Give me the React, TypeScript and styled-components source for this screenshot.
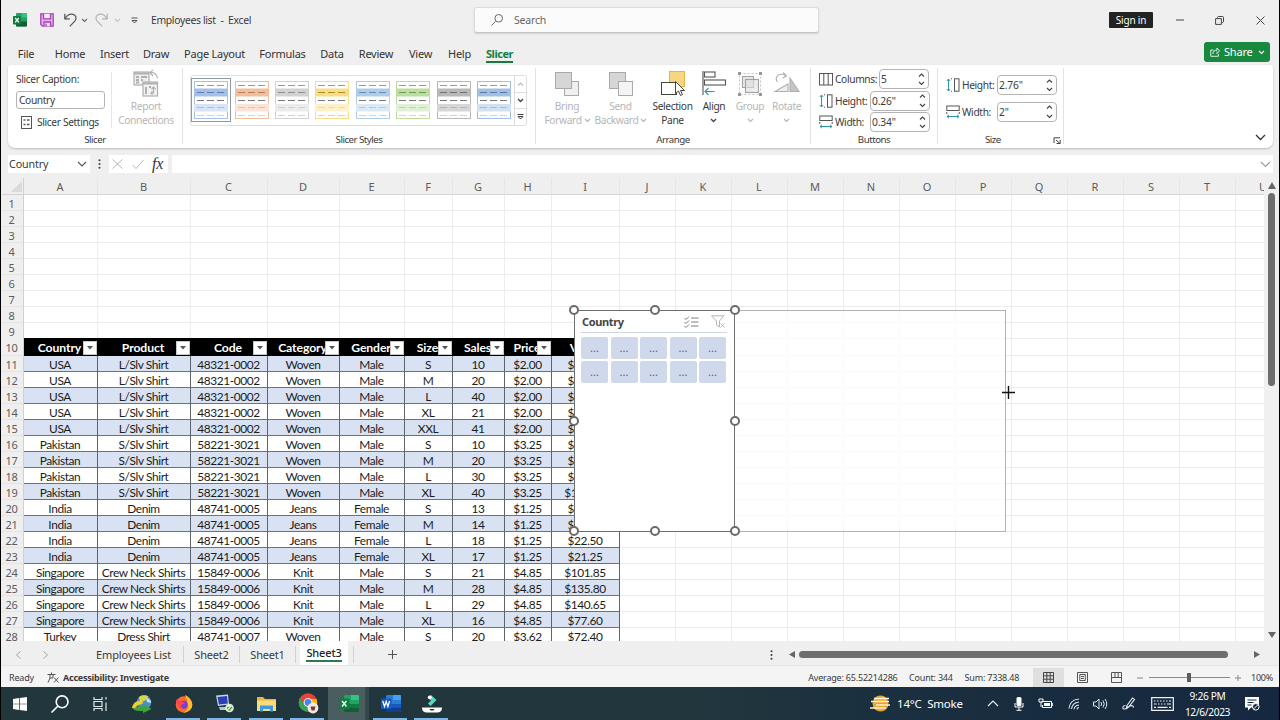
import React from 'react';
import styled, { createGlobalStyle } from 'styled-components';

const UI = '"Noto Sans", "Open Sans", sans-serif';
const CELL = 'Lato, "Liberation Sans", sans-serif';

const Global = createGlobalStyle`
  * { box-sizing: border-box; }
  body { margin: 0; font-family: ${UI}; background: #efefef; overflow: hidden; }
  svg { display: block; flex: none; overflow: visible; }
`;

/* ---------- shell ---------- */
const Window = styled.div`
  width: 1280px; height: 720px; display: flex; flex-direction: column; overflow: hidden;
  background: #efefef; border-left: 1px solid #000; border-right: 1px solid #000; color: #333;
  white-space: nowrap; font-size: 11px;
`;
const Label = styled.span<{ $size?: number; $ls?: number; $color?: string; $weight?: number }>`
  font-size: ${p => p.$size ?? 10.2}px; letter-spacing: ${p => p.$ls ?? -0.35}px;
  color: ${p => p.$color ?? '#3a3a3a'}; font-weight: ${p => p.$weight ?? 400}; line-height: 14px;
`;
const Slot = styled.div<{ $w: number }>`
  width: ${p => p.$w}px; height: 100%; flex: none; display: flex; align-items: center; justify-content: center;
`;

/* ---------- title bar ---------- */
const TitleBar = styled.header`
  height: 40px; display: flex; align-items: center; flex: none; padding-left: 5px;
`;
const DocName = styled.div`width: 326px; padding-left: 3px; display: flex; flex: none;`;
const SearchBox = styled.div`
  width: 345px; height: 26px; background: #fbfbfb; border: 1px solid #dcdcdc; border-bottom-color: #c4c4c4; border-radius: 3px;
  display: flex; align-items: center; gap: 11px; padding-left: 16px; box-shadow: 0 1px 2px rgba(0,0,0,.12); flex: none;
`;
const SignIn = styled.div`
  margin-left: 290px; width: 44px; height: 16px; background: #222; border-radius: 1px; flex: none;
  display: flex; align-items: center; justify-content: center;
`;

/* ---------- ribbon tabs ---------- */
const TabRow = styled.nav`height: 25px; display: flex; flex: none; padding-left: 8px;`;
const RibbonTab = styled.div<{ $w: number; $active?: boolean }>`
  width: ${p => p.$w}px; height: 25px; display: flex; justify-content: center; padding-top: 6px;
  span {
    height: 17px; line-height: 16px; font-size: 11px;
    color: ${p => (p.$active ? '#17803d' : '#333')}; font-weight: ${p => (p.$active ? 700 : 400)};
    letter-spacing: ${p => (p.$active ? -0.45 : -0.25)}px;
    border-bottom: ${p => (p.$active ? '2px solid #1a7a40' : 'none')};
  }
`;
const ShareButton = styled.div`
  margin-left: auto; margin-right: 9px; margin-top: 2px; width: 66px; height: 20px; background: #18893f; border-radius: 3px;
  display: flex; align-items: center; padding: 0 5px 0 6px; gap: 4px;
`;

/* ---------- ribbon ---------- */
const Ribbon = styled.section`
  height: 83px; margin: 0 6px 0 7px; background: #fff; border-radius: 3px 3px 7px 7px; flex: none; display: flex;
  box-shadow: 0 1px 2px rgba(0,0,0,.22); padding-top: 3px;
`;
const Group = styled.div<{ $w: number }>`
  width: ${p => p.$w}px; height: 76px; border-right: 1px solid #e2e2e2; display: flex; flex-direction: column; flex: none;
`;
const GroupBody = styled.div<{ $pad?: string }>`height: 65px; flex: none; display: flex; padding: ${p => p.$pad ?? '0'};`;
const GroupFoot = styled.div`height: 14px; display: flex; justify-content: center;`;
const SizeFoot = styled.div`height: 14px; display: flex; justify-content: space-between; padding: 0 2px 0 47px;`;
const CaptionPart = styled.div`
  width: 104px; height: 56px; margin-top: 4px; padding-left: 8px; display: flex; flex-direction: column; border-right: 1px solid #e6e6e6;
`;
const CaptionInput = styled.div`
  width: 89px; height: 18px; flex: none; margin-top: 5px; border: 1px solid #b4b4b4; border-radius: 3px; display: flex; align-items: center; padding-left: 2px;
`;
const SettingsLine = styled.div`display: flex; align-items: center; gap: 5px; margin: 6px 0 0 5px;`;
const BigButton = styled.div<{ $w: number; $pt?: number }>`
  width: ${p => p.$w}px; display: flex; flex-direction: column; align-items: center; padding-top: ${p => p.$pt ?? 3}px; flex: none;
`;
const BigText = styled.div<{ $mt?: number }>`
  margin-top: ${p => p.$mt ?? 3}px; display: flex; flex-direction: column; align-items: center;
`;
const WithCaret = styled.div`display: flex; align-items: center; gap: 3px; height: 14px;`;

const Gallery = styled.div`
  width: 337px; height: 51px; border: 1px solid #dedede; border-radius: 3px; display: flex; justify-content: space-between;
`;
const Tiles = styled.div`display: flex; padding: 2px 0 0 0;`;
const TileFrame = styled.div<{ $on?: boolean }>`
  width: 40.4px; height: 44px; border: 1.5px solid ${p => (p.$on ? '#8c98a2' : 'transparent')}; display: flex; align-items: center; justify-content: center;
`;
const GalleryNav = styled.div`
  width: 12px; border-left: 1px solid #dcdcdc; display: flex; flex-direction: column;
  div { flex: 1; display: flex; align-items: center; justify-content: center; }
  div + div { border-top: 1px solid #dcdcdc; }
`;

const Fields = styled.div<{ $gap: number }>`display: flex; flex-direction: column; gap: ${p => p.$gap}px;`;
const FieldRow = styled.div`display: flex; align-items: center;`;
const FieldLabel = styled.div<{ $w: number }>`width: ${p => p.$w}px; display: flex; padding-left: 2px;`;
const Spinner = styled.div<{ $w: number }>`
  width: ${p => p.$w}px; height: 20px; border: 1px solid #b4b4b4; border-radius: 4px; display: flex; align-items: center;
  justify-content: space-between; padding: 0 4px 0 1px;
`;
const Arrows = styled.div`display: flex; flex-direction: column; gap: 6px;`;
const Collapse = styled.div`margin-left: auto; padding: 67px 8px 0 0;`;

/* ---------- formula bar ---------- */
const FormulaRow = styled.div`height: 30px; padding: 7px 6px 5px 7px; display: flex; flex: none;`;
const NameBox = styled.div`
  width: 82px; height: 18px; background: #fff; display: flex; align-items: center; justify-content: space-between; padding: 0 4px 0 1px;
`;
const FxBox = styled.div`
  width: 59px; height: 18px; background: #fff; display: flex; align-items: center; justify-content: space-between; padding: 0 5px 0 3px;
`;
const Fx = styled.span`font: italic 400 16px/16px "Liberation Serif", serif; color: #333; letter-spacing: -0.3px;`;
const FormulaInput = styled.div`
  flex: 1; height: 18px; margin-left: 4px; background: #fff; display: flex; align-items: center; justify-content: flex-end; padding-right: 3px;
`;

/* ---------- sheet ---------- */
const SheetArea = styled.main`height: 463px; display: flex; flex: none; position: relative; overflow: hidden;`;
const Grid = styled.div`width: 1263px; flex: none; overflow: hidden; background: #fff;`;
const cols = [74, 93, 77, 72, 65, 48, 52, 47, 68, ...Array(12).fill(56)] as number[];
const TEMPLATE = `23px ${cols.map(c => c + 'px').join(' ')}`;
const Row = styled.div<{ $h: number; $lift?: boolean }>`
  display: grid; grid-template-columns: ${TEMPLATE}; grid-template-rows: ${p => p.$h}px; height: ${p => p.$h}px; width: 1400px;
  margin-top: ${p => (p.$lift ? -1 : 0)}px;
`;
const ColHead = styled.div`
  background: #efefef; border-bottom: 1px solid #d4d4d4; border-right: 1px solid #e6e6e6; color: #5c5c5c;
  font-size: 11px; line-height: 17px; text-align: center; padding-right: 1px;
`;
const Corner = styled.div`
  background: #efefef; border-bottom: 1px solid #d4d4d4; border-right: 1px solid #d0d0d0;
  display: flex; align-items: flex-end; justify-content: flex-end; padding: 0 1px 2px 0;
`;
const RowHead = styled.div<{ $h: number }>`
  background: #efefef; border-right: 1px solid #d0d0d0; border-bottom: 1px solid #e4e4e4; color: #5c5c5c;
  font-size: 11px; line-height: ${p => p.$h}px; text-align: center; padding-right: 1px; letter-spacing: -0.2px;
`;
const Blank = styled.div`border-right: 1px solid #ececec; border-bottom: 1px solid #ececec;`;
const Cell = styled.div<{ $band: boolean }>`
  background: ${p => (p.$band ? '#d9e2f2' : '#fff')}; border-right: 1px solid #5f646c; border-bottom: 1px solid #6d7178;
  font: 400 11.9px/17px ${CELL}; letter-spacing: -0.4px; color: #1c1c1c; text-align: center; padding-right: 1px;
`;
const HeadCell = styled.div`
  background: #000; color: #fff; font: 700 12.2px/19px ${CELL}; letter-spacing: -0.1px; display: flex; justify-content: center;
  position: relative; overflow: hidden; padding-right: 3px;
`;
const Filter = styled.div`
  position: absolute; right: 1px; top: 3px; width: 14px; height: 14px; background: #fff; border: 1px solid #c8c8c8;
  display: flex; align-items: center; justify-content: center;
`;
const VScroll = styled.div`
  width: 15px; height: 100%; background: #f0f0f0; display: flex; flex-direction: column; align-items: center; justify-content: space-between; padding: 4px 0 3px;
`;
const VTop = styled.div`display: flex; flex-direction: column; align-items: center; gap: 4px;`;
const VThumb = styled.div`width: 7px; height: 193px; background: #6e6e6e; border-radius: 4px;`;

/* ---------- slicer floating object ---------- */
const DragOutline = styled.div`
  position: absolute; left: 573px; top: 132px; width: 432px; height: 222px; border: 1px solid #b2b2b2; background: rgba(255,255,255,.72);
`;
const SlicerBox = styled.div`
  position: absolute; left: 573px; top: 132px; width: 161px; height: 222px; border: 1px solid #6f6f6f; background: #fff; padding: 0 7px 0 6px;
`;
const SlicerHead = styled.div`
  height: 22px; border-bottom: 1px solid #cfd6e6; display: flex; align-items: center; gap: 12px; padding: 0 2px 0 1px;
`;
const SlicerTitle = styled.span`font: 700 11px/14px "Noto Sans", sans-serif; letter-spacing: -0.35px; color: #444; flex: 1;`;
const SlicerItems = styled.div`display: grid; grid-template-columns: repeat(5, 27px); gap: 2px 2.5px; margin-top: 4px;`;
const SlicerItem = styled.div`
  height: 22px; background: #d0d9ec; border-radius: 2px; text-align: center; font: 400 11px/21px "Noto Sans", sans-serif; color: #4f5f85;
`;
const Handle = styled.i<{ $x: number; $y: number }>`
  position: absolute; left: ${p => p.$x - 4.5}px; top: ${p => p.$y - 4.5}px; width: 10px; height: 10px; border-radius: 50%;
  border: 2px solid #6a6a6a; background: #fff;
`;
const Cross = styled.div`position: absolute; left: 1001px; top: 208px;`;

/* ---------- sheet tabs ---------- */
const TabsBar = styled.div`height: 25px; background: #efefef; display: flex; align-items: center; flex: none; border-bottom: 1px solid #e4e4e4; padding-top: 3px;`;
const SheetTab = styled.div<{ $w: number; $line?: boolean }>`
  width: ${p => p.$w}px; height: 17px; display: flex; align-items: center; justify-content: center; flex: none;
  border-right: 1px solid ${p => (p.$line ? '#d2d2d2' : 'transparent')};
`;
const ActiveTab = styled.div`
  width: 48px; height: 24px; margin: -4px 0 0 4px; background: #fff; display: flex; justify-content: center; flex: none; padding-top: 4px;
  span { height: 17px; line-height: 15px; border-bottom: 2px solid #2c7a51; }
`;
const HTrack = styled.div`width: 429px; height: 7px; background: #6e6e6e; border-radius: 4px; margin-right: 26px; flex: none;`;

/* ---------- status bar ---------- */
const Status = styled.div`height: 21px; background: #f4f4f4; display: flex; align-items: center; flex: none; padding-top: 2px;`;
const ViewButton = styled.div<{ $w: number; $on?: boolean }>`
  width: ${p => p.$w}px; height: 19px; background: ${p => (p.$on ? '#dfdfdf' : 'transparent')}; display: flex; align-items: center; justify-content: center;
`;
const ZoomTrack = styled.div`
  width: 83px; height: 9px; display: flex; align-items: center; justify-content: center;
  background: linear-gradient(#8a8a8a, #8a8a8a) center / 100% 1px no-repeat;
`;
const ZoomThumb = styled.div`width: 4px; height: 9px; background: #5e5e5e;`;

/* ---------- taskbar ---------- */
const Taskbar = styled.footer`
  height: 33px; flex: none; display: flex; background: linear-gradient(90deg, #21373c 0%, #21363d 55%, #1a2f3f 70%, #16283f 100%);
  margin: 0 -1px;
`;
const AppSlot = styled.div<{ $open?: boolean; $active?: boolean }>`
  width: 41.4px; height: 33px; display: flex; align-items: center; justify-content: center; flex: none; padding-left: 1px;
  background: ${p => (p.$active ? 'linear-gradient(90deg, #4a5d60 90%, #34494e 90%)' : p.$open ? 'linear-gradient(#7eb6e8, #7eb6e8) center bottom / 34px 2px no-repeat' : 'none')};
`;
const Weather = styled.div`margin-left: auto; width: 110px; display: flex; align-items: center; gap: 6px;`;
const Clock = styled.div`
  width: 55px; display: flex; flex-direction: column; align-items: center; gap: 2px; padding-top: 2px;
`;

/* ---------- icons ---------- */
const Caret = ({ w = 6, c = '#444', up = false, s = 1.1 }: { w?: number; c?: string; up?: boolean; s?: number }) => (
  <svg width={w} height={w / 2} viewBox="0 0 6 3" fill="none" stroke={c} strokeWidth={(s * 6) / w}>
    <path d={up ? 'M0 3 3 0 6 3' : 'M0 0 3 3 6 0'} />
  </svg>
);
const ExcelSmall = () => (
  <svg width="14" height="14" viewBox="0 0 14 14">
    <rect x="3" y="0" width="11" height="13.5" rx="1" fill="#21a366" />
    <path d="M8.5 0H13q1 0 1 1v3.4H8.500z" fill="#33c481" />
    <path d="M3 8.500h11v4q0 1-1 1H4q-1 0-1-1z" fill="#185c37" />
    <rect x="0" y="3" width="8" height="8.500" rx=".8" fill="#107c41" />
    <path d="M2.200 5 5.800 9.300M5.800 5 2.200 9.300" stroke="#fff" strokeWidth="1.200" />
  </svg>
);
const Save = () => (
  <svg width="14" height="14" viewBox="0 0 14 14" fill="none" stroke="#a33fb5" strokeWidth="1.300">
    <path d="M.8.8h12.400v12.400H2.600L.8 11.500z" fill="#e7b4ee" />
    <path d="M3.500.8v5h7v-5" fill="#f9eafb" /><path d="M4 13.200V9h6.500v4.200M6 10.500v2.700" fill="#f9eafb" />
  </svg>
);
const Undo = ({ c, flip }: { c: string; flip?: boolean }) => (
  <svg width="13" height="14" viewBox="0 0 13 14" fill="none" stroke={c} strokeWidth="1.200">
    <g transform={flip ? 'translate(13 0) scale(-1 1)' : undefined}>
      <path d="M.8.800v5h5M1 5.600C3.500 1.500 6.500.800 9 1.300c3 .7 4 4.200 2 6.500L5.800 13.300" />
    </g>
  </svg>
);
const ReportIcon = () => (
  <svg width="26" height="26" viewBox="0 0 26 26" fill="none" stroke="#b0b0b0" strokeWidth="1.200">
    <rect x="1" y="1" width="15" height="13" fill="#efefef" /><path d="M1 2.500h15M3 6h3M8 6h6M3 9h3M3 11.500h3M8 9h2" strokeWidth="2" />
    <path d="M17 1.500c4-.5 7 2 7.500 6M20 5l-3-3.500L20-1" />
    <rect x="10" y="11" width="14.500" height="14" fill="#f2f2f2" /><path d="M10 12.500h14.500M13 16v7M16 16h2" strokeWidth="2" />
    <path d="M18 22h2.500v-6M18.500 18l2-2 2 2M19.500 20.500 18 22l1.500 1.500" />
  </svg>
);
const SettingsIcon = () => (
  <svg width="11" height="13" viewBox="0 0 11 13" fill="none" stroke="#555" strokeWidth="1">
    <rect x=".5" y=".5" width="10" height="12" /><path d="M2.500 4h2M6 4h2.500M2.500 8.500h2M6 8.500h2.500" strokeWidth="1.500" />
  </svg>
);
const Bring = () => (
  <svg width="24" height="24" viewBox="0 0 24 24" stroke="#a9a9a9" strokeWidth="1"><rect x="9.500" y="9.500" width="14" height="14" fill="#f0f0f0" /><rect x=".5" y=".5" width="16" height="16" fill="#d6d6d6" /></svg>
);
const SendBack = () => (
  <svg width="24" height="24" viewBox="0 0 24 24" stroke="#a9a9a9" strokeWidth="1"><rect x=".5" y=".5" width="16" height="16" fill="#d6d6d6" /><rect x="9.500" y="9.500" width="14" height="14" fill="#f4f4f4" /></svg>
);
const SelectionPane = () => (
  <svg width="25" height="25" viewBox="0 0 25 25" stroke="#444" strokeWidth="1">
    <rect x="9.500" y=".5" width="15" height="15" fill="#f8d67f" stroke="#e3b64b" /><rect x="1.500" y="11.500" width="15" height="12" fill="#fff" />
    <path d="M15.500 10.500v12l3-2.500 2 4.500 2-1-2-4h4z" fill="#fff" />
  </svg>
);
const AlignIcon = () => (
  <svg width="24" height="25" viewBox="0 0 24 25" fill="none" stroke="#555" strokeWidth="1.100">
    <path d="M1 0v24" /><rect x="2.500" y="1" width="10.500" height="5" /><rect x="2.500" y="9" width="21" height="5" />
    <path d="M3 20.500h9.500M6.500 17 3 20.500 6.500 24" stroke="#2e95ab" />
  </svg>
);
const GroupIcon = () => (
  <svg width="24" height="24" viewBox="0 0 24 24" fill="none" stroke="#b4b4b4" strokeWidth="1.100">
    <rect x="1.500" y="1.500" width="21" height="21" strokeDasharray="2 2" strokeWidth=".8" /><rect x="4.500" y="4.500" width="11" height="11" fill="#e9e9e9" stroke="#a4a4a4" /><rect x="7.500" y="7.500" width="13" height="13" fill="#e0e0e0" fillOpacity=".6" stroke="#a0a0a0" />
    <path d="M0 1.500h3M21 1.500h3M0 22.500h3M21 22.500h3" stroke="#979797" strokeWidth="3" />
  </svg>
);
const RotateIcon = () => (
  <svg width="26" height="24" viewBox="0 0 26 24" fill="none" stroke="#b0b0b0" strokeWidth="1.100">
    <path d="M1 19.500 14 12v7.500z" fill="#eee" /><path d="M16 6v13.500h9z" fill="#c4c4c4" />
    <path d="M3.500 10C0 5 5 0 11.500 3.500M9 .5l3.500 3.300-4 2.500" />
  </svg>
);
const ColumnsIcon = () => (
  <svg width="14" height="13" viewBox="0 0 14 13" fill="none" stroke="#555" strokeWidth="1"><rect x=".5" y=".5" width="13" height="11.500" /><path d="M4.800.5V12M9.200.5V12" /></svg>
);
const HeightIcon = () => (
  <svg width="14" height="14" viewBox="0 0 14 14" fill="none" stroke="#555" strokeWidth="1">
    <rect x="8.500" y=".8" width="4.500" height="12.400" /><path d="M5 .8h2M5 13.200h2" strokeDasharray="1 1" /><path d="M2.500 1v12M.8 3l1.700-2 1.700 2M.8 11l1.700 2 1.700-2" stroke="#2e95ab" />
  </svg>
);
const WidthIcon = () => (
  <svg width="14" height="14" viewBox="0 0 14 14" fill="none" stroke="#555" strokeWidth="1">
    <rect x=".8" y="1" width="12.400" height="4.500" /><path d="M.8 7v2M13.200 7v2" /><path d="M1 11.500h12M3 9.800l-2 1.700 2 1.700M11 9.800l2 1.700-2 1.700" stroke="#2e95ab" />
  </svg>
);
const StyleTile = ({ a, b, line }: { a: string; b: string; line: string }) => (
  <svg width="34" height="38" viewBox="0 0 34 38">
    <rect x=".5" y=".5" width="33" height="37" fill="#fff" stroke={a} />
    <rect x="0" y="7.500" width="34" height="8" fill={a} /><rect x="0" y="23" width="34" height="7.500" fill={b} />
    <path d="M3 4.500h7M13 4.500h7M23 4.500h7" stroke="#999" /><path d="M3 11.500h7M13 11.500h7M23 11.500h7" stroke={line} />
    <path d="M3 19.500h7M13 19.500h7M23 19.500h7" stroke="#777" /><path d="M3 26.500h7M13 26.500h7M23 26.500h7" stroke={a} /><path d="M3 34.500h7M13 34.500h7M23 34.500h7" stroke="#d2d2d2" />
  </svg>
);
const Dots = () => (
  <svg width="3" height="10" viewBox="0 0 3 10" fill="#444"><circle cx="1.500" cy="1.300" r="1.050" /><circle cx="1.500" cy="5" r="1.050" /><circle cx="1.500" cy="8.700" r="1.050" /></svg>
);
const Stroke = ({ w, h, d, c, s = 1 }: { w: number; h: number; d: string; c: string; s?: number }) => (
  <svg width={w} height={h} viewBox={`0 0 ${w} ${h}`} fill="none" stroke={c} strokeWidth={s}><path d={d} /></svg>
);
const Tri = ({ d, w = 8, h = 8 }: { d: string; w?: number; h?: number }) => (
  <svg width={w} height={h} viewBox="0 0 8 8" preserveAspectRatio="none" fill="#666"><path d={d} /></svg>
);

/* taskbar app icons */
const Idm = () => (
  <svg width="20" height="18" viewBox="0 0 20 18"><circle cx="12" cy="7.500" r="7.300" fill="#4d8fc0" /><path d="M7 2C9-.2 14-.5 16.500 1.500L13 5.500 8 8z" fill="#d8d648" /><path d="M14 3c3 0 5 2 5.200 5l-4.200-1z" fill="#c5e1f2" /><path d="M0 13C1 7.500 5.500 5 9.500 6.500l2 1.500-3 1.500C6 9.500 4 11 3.500 14z" fill="#f4cc2c" /><path d="M1.500 14.500c2-3 5-3.500 9.500-3V9l8.500 5-8.500 4v-2.200c-3 .5-6 .2-9.500-1.300z" fill="#3fa53a" /></svg>
);
const Firefox = () => (
  <svg width="18" height="18" viewBox="0 0 18 18"><circle cx="9" cy="9.500" r="8.300" fill="#ff6a2a" /><path d="M10 0c4 2 8 6 7.200 11-.8 4-5 6.500-8.500 6.500C13 15 14 11 12 8c1-3-1-5-2-8z" fill="#ffbd2e" /><circle cx="8.800" cy="9.800" r="4" fill="#7a3fd0" /><path d="M1 5c2-1 5 0 6.500 2L10 8 7 9.500c-2 1-1 3 1 3.500-3 1-6-1-6-4z" fill="#ff4656" /></svg>
);
const Pc = () => (
  <svg width="19" height="19" viewBox="0 0 19 19"><path d="M1 1.500 13 .5l1 10L3 12z" fill="#c9d3ee" /><path d="M2.500 3 12 2l.8 7.500L4 10.500z" fill="#2b3fb0" /><path d="M4 13h8l2 3H5z" fill="#b9c3d8" /><circle cx="14.500" cy="14" r="4.300" fill="#dff0d8" /><path d="M12 14.500l1.500-1.500M15 15l2-2M13.500 16h2" stroke="#3d9a3d" strokeWidth="1.300" /></svg>
);
const Folder = () => (
  <svg width="19" height="16" viewBox="0 0 19 16"><path d="M0 1h6l2 2h11v12H0z" fill="#e9b53c" /><path d="M0 4.500h19V15H0z" fill="#fbdc7c" /><path d="M3 15.500V9.500h13v6h-3v-2.500H6v2.500z" fill="#3f9be0" /></svg>
);
const Chrome = () => (
  <svg width="22" height="21" viewBox="0 0 22 21"><circle cx="11" cy="9.500" r="9.300" fill="#e84335" /><path d="M3 4.800A9.300 9.300 0 0 0 10 18.700l4-7-7-.5z" fill="#34a353" /><path d="M19.500 6A9.300 9.300 0 0 1 11 18.800l4-8-3-4.800z" fill="#fbbc09" /><circle cx="11" cy="9.500" r="4.400" fill="#fff" /><circle cx="11" cy="9.500" r="3.400" fill="#4384f3" /><circle cx="16" cy="15" r="5.400" fill="#f5e9e6" /><path d="M13.500 13.500h5l-1 4h-3z" fill="#7c3b35" /></svg>
);
const OfficeIcon = ({ a, b, c, d, tile, mark }: Record<'a' | 'b' | 'c' | 'd' | 'tile' | 'mark', string>) => (
  <svg width="20" height="17" viewBox="0 0 20 17"><rect x="5" y="0" width="15" height="17" rx="1.200" fill={a} /><path d="M12 0h6.800q1.200 0 1.200 1.200V5h-8z" fill={b} /><path d="M5 9h15v3.500H5z" fill={c} /><path d="M5 12.500h15v3.300q0 1.200-1.200 1.200H6.200Q5 17 5 15.800z" fill={d} /><rect x="0" y="3.500" width="10.500" height="10.500" rx="1" fill={tile} /><path d={mark} stroke="#fff" strokeWidth="1.300" fill="none" /></svg>
);
const Filmora = () => (
  <svg width="20" height="18" viewBox="0 0 20 18"><path d="M6 2.500 9 0l5.500 5L8.500 11 6 8.500 9 5.500z" fill="#52dbc0" /><circle cx="7.700" cy="2.300" r="1.900" fill="#fff" /><path d="M0 12.500h20q0 5-5 5H5q-5 0-5-5z" fill="#fff" /><path d="M7.500 14h5l-1 1.500h-3z" fill="#21363d" /></svg>
);

/* ---------- data ---------- */
const tabs: [string, number][] = [['File', 34], ['Home', 54], ['Insert', 35], ['Draw', 48], ['Page Layout', 69], ['Formulas', 67], ['Data', 32], ['Review', 56], ['View', 33], ['Help', 45], ['Slicer', 35]];
const styleTiles = [
  ['#a5c0e6', '#d8e4f5', '#5f80b2'], ['#f0bf9e', '#fbe4d5', '#b77f5a'], ['#d2d2d2', '#ebebeb', '#8f8f8f'], ['#f8dd84', '#fdf1ca', '#a98e32'],
  ['#aecde8', '#dbe9f5', '#668eb2'], ['#bbde9f', '#e0f0d4', '#75995c'], ['#b8b8b8', '#d6d6d6', '#707070'], ['#a2bee2', '#d2e1f2', '#5878a6'],
];
const heads = ['Country', 'Product', 'Code', 'Category', 'Gender', 'Size', 'Sales', 'Price', 'Value'];
const data = [
  ['USA', 'L/Slv Shirt', '48321-0002', 'Woven', 'Male', 'S', '10', '$2.00', '$20.00'],
  ['USA', 'L/Slv Shirt', '48321-0002', 'Woven', 'Male', 'M', '20', '$2.00', '$40.00'],
  ['USA', 'L/Slv Shirt', '48321-0002', 'Woven', 'Male', 'L', '40', '$2.00', '$80.00'],
  ['USA', 'L/Slv Shirt', '48321-0002', 'Woven', 'Male', 'XL', '21', '$2.00', '$42.00'],
  ['USA', 'L/Slv Shirt', '48321-0002', 'Woven', 'Male', 'XXL', '41', '$2.00', '$82.00'],
  ['Pakistan', 'S/Slv Shirt', '58221-3021', 'Woven', 'Male', 'S', '10', '$3.25', '$32.50'],
  ['Pakistan', 'S/Slv Shirt', '58221-3021', 'Woven', 'Male', 'M', '20', '$3.25', '$65.00'],
  ['Pakistan', 'S/Slv Shirt', '58221-3021', 'Woven', 'Male', 'L', '30', '$3.25', '$97.50'],
  ['Pakistan', 'S/Slv Shirt', '58221-3021', 'Woven', 'Male', 'XL', '40', '$3.25', '$130.00'],
  ['India', 'Denim', '48741-0005', 'Jeans', 'Female', 'S', '13', '$1.25', '$16.25'],
  ['India', 'Denim', '48741-0005', 'Jeans', 'Female', 'M', '14', '$1.25', '$17.50'],
  ['India', 'Denim', '48741-0005', 'Jeans', 'Female', 'L', '18', '$1.25', '$22.50'],
  ['India', 'Denim', '48741-0005', 'Jeans', 'Female', 'XL', '17', '$1.25', '$21.25'],
  ['Singapore', 'Crew Neck Shirts', '15849-0006', 'Knit', 'Male', 'S', '21', '$4.85', '$101.85'],
  ['Singapore', 'Crew Neck Shirts', '15849-0006', 'Knit', 'Male', 'M', '28', '$4.85', '$135.80'],
  ['Singapore', 'Crew Neck Shirts', '15849-0006', 'Knit', 'Male', 'L', '29', '$4.85', '$140.65'],
  ['Singapore', 'Crew Neck Shirts', '15849-0006', 'Knit', 'Male', 'XL', '16', '$4.85', '$77.60'],
  ['Turkey', 'Dress Shirt', '48741-0007', 'Woven', 'Male', 'S', '20', '$3.62', '$72.40'],
];
const letters = 'ABCDEFGHIJKLMNOPQRSTU'.split('');
const blanks = (from: number) => cols.slice(from).map((_, i) => <Blank key={`b${i}`} />);
const GREY = '#b5b5b5';

const Foot = ({ children }: { children: React.ReactNode }) => <Label $size={9.700} $ls={-0.5}>{children}</Label>;
const SpinField = ({ icon, label, lw, value, w }: { icon: React.ReactNode; label: string; lw: number; value: string; w: number }) => (
  <FieldRow>
    {icon}
    <FieldLabel $w={lw}><Label>{label}</Label></FieldLabel>
    <Spinner $w={w}>
      <Label $ls={-0.1}>{value}</Label>
      <Arrows><Caret w={5} up /><Caret w={5} /></Arrows>
    </Spinner>
  </FieldRow>
);

export default function App() {
  return (
    <>
      <Global />
      <Window>
        <TitleBar>
          <Slot $w={28}><ExcelSmall /></Slot>
          <Slot $w={25}><Save /></Slot>
          <Slot $w={22}><Undo c="#555" /></Slot>
          <Slot $w={7}><Caret c="#666" w={5} /></Slot>
          <Slot $w={27}><Undo c="#b4b4b4" flip /></Slot>
          <Slot $w={5}><Caret c="#c4c4c4" w={5} /></Slot>
          <Slot $w={28}><Stroke w={7} h={7} d="M.5 1h6M1 3.500l2.500 2.500L6 3.500z" c="#555" /></Slot>
          <DocName><Label $size={10.400} $ls={-0.34}>Employees list&nbsp; -&nbsp; Excel</Label></DocName>
          <SearchBox>
            <Stroke w={12} h={12} d="M4.500 7.500.5 11.500M11.500 4.300a3.800 3.800 0 1 1-7.600 0 3.800 3.800 0 0 1 7.600 0" c="#666" />
            <Label $size={10.500} $ls={-0.2} $color="#666">Search</Label>
          </SearchBox>
          <SignIn><Label $size={10} $ls={-0.2} $color="#fff">Sign in</Label></SignIn>
          <Slot $w={53}><Stroke w={8} h={2} d="M0 1h8" c="#444" /></Slot>
          <Slot $w={27}><Stroke w={9} h={9} d="M.6 2.600h5.800v5.800H.6zM2.500 2.300V1.500q0-1 1-1h4q1 0 1 1v4q0 1-1 1h-.8" c="#444" /></Slot>
          <Slot $w={8} />
          <Slot $w={38}><Stroke w={9} h={9} d="M.5.5l8 8M8.500.5l-8 8" c="#444" /></Slot>
        </TitleBar>
        <TabRow>
          {tabs.map(([t, w]) => <RibbonTab key={t} $w={w} $active={t === 'Slicer'}><span>{t}</span></RibbonTab>)}
          <ShareButton>
            <Stroke w={10} h={10} d="M3.500 3H.8v6.300h7.500V7M3 7c0-3 1.500-3.800 4-3.800V1l2.500 3L7 6.500V4.700" c="#d9f0e0" />
            <Label $size={11} $ls={-0.2} $color="#fff">Share</Label>
            <Slot $w={10}><Caret w={5} c="#fff" /></Slot>
          </ShareButton>
        </TabRow>

        <Ribbon>
          <Group $w={175}>
            <GroupBody>
              <CaptionPart>
                <Label>Slicer Caption:</Label>
                <CaptionInput><Label>Country</Label></CaptionInput>
                <SettingsLine><SettingsIcon /><Label>Slicer Settings</Label></SettingsLine>
              </CaptionPart>
              <BigButton $w={68}>
                <ReportIcon />
                <BigText $mt={2}><Label $color={GREY}>Report</Label><Label $color={GREY}>Connections</Label></BigText>
              </BigButton>
            </GroupBody>
            <GroupFoot><Foot>Slicer</Foot></GroupFoot>
          </Group>
          <Group $w={353}>
            <GroupBody $pad="7px 0 0 7px">
              <Gallery>
                <Tiles>{styleTiles.map(([a, b, l], i) => <TileFrame key={i} $on={i === 0}><StyleTile a={a} b={b} line={l} /></TileFrame>)}</Tiles>
                <GalleryNav>
                  <div><Caret w={5} up c="#bbb" /></div>
                  <div><Caret w={5} s={1.400} /></div>
                  <div><Stroke w={7} h={6} d="M.5.5h6M1 2.500l2.500 2.500L6 2.500z" c="#444" /></div>
                </GalleryNav>
              </Gallery>
            </GroupBody>
            <GroupFoot><Foot>Slicer Styles</Foot></GroupFoot>
          </Group>
          <Group $w={275}>
            <GroupBody $pad="0 0 0 4px">
              <BigButton $w={54} $pt={4}><Bring />
                <BigText><Label $color={GREY}>Bring</Label><WithCaret><Label $color={GREY}>Forward</Label><Caret w={5} c={GREY} /></WithCaret></BigText>
              </BigButton>
              <BigButton $w={53} $pt={4}><SendBack />
                <BigText><Label $color={GREY}>Send</Label><WithCaret><Label $color={GREY}>Backward</Label><Caret w={5} c={GREY} /></WithCaret></BigText>
              </BigButton>
              <BigButton $w={51}><SelectionPane />
                <BigText><Label>Selection</Label><Label>Pane</Label></BigText>
              </BigButton>
              <BigButton $w={32}><AlignIcon />
                <BigText><Label>Align</Label><WithCaret><Caret w={5} s={1.300} /></WithCaret></BigText>
              </BigButton>
              <BigButton $w={40} $pt={4}><GroupIcon />
                <BigText><Label $color={GREY}>Group</Label><WithCaret><Caret w={5} c={GREY} /></WithCaret></BigText>
              </BigButton>
              <BigButton $w={33} $pt={4}><RotateIcon />
                <BigText><Label $color={GREY}>Rotate</Label><WithCaret><Caret w={5} c={GREY} /></WithCaret></BigText>
              </BigButton>
            </GroupBody>
            <GroupFoot><Foot>Arrange</Foot></GroupFoot>
          </Group>
          <Group $w={127}>
            <GroupBody $pad="1px 0 0 8px">
              <Fields $gap={1.500}>
                <SpinField icon={<ColumnsIcon />} label="Columns:" lw={46} value="5" w={50} />
                <SpinField icon={<HeightIcon />} label="Height:" lw={37} value={'0.26"'} w={60} />
                <SpinField icon={<WidthIcon />} label="Width:" lw={37} value={'0.34"'} w={60} />
              </Fields>
            </GroupBody>
            <GroupFoot><Foot>Buttons</Foot></GroupFoot>
          </Group>
          <Group $w={126}>
            <GroupBody $pad="7px 0 0 8px">
              <Fields $gap={6.500}>
                <SpinField icon={<HeightIcon />} label="Height:" lw={37} value={'2.76"'} w={60} />
                <SpinField icon={<WidthIcon />} label="Width:" lw={37} value={'2"'} w={60} />
              </Fields>
            </GroupBody>
            <SizeFoot>
              <Foot>Size</Foot>
              <Slot $w={8}><Stroke w={8} h={7} d="M1 6V.8h6M3 3l4 3.500M7.200 3v3.500H3.500" c="#444" /></Slot>
            </SizeFoot>
          </Group>
          <Collapse><Caret w={9} c="#333" s={1.300} /></Collapse>
        </Ribbon>

        <FormulaRow>
          <NameBox><Label $size={10.700} $ls={-0.1}>Country</Label><Caret w={8} c="#555" /></NameBox>
          <Slot $w={19}><Dots /></Slot>
          <FxBox>
            <Stroke w={11} h={10} d="M.5.5l10 9M10.500.5l-10 9" c="#b8b8b8" />
            <Stroke w={12} h={10} d="M.5 6l3.500 3.500L11.500 1" c="#b8b8b8" />
            <Fx>fx</Fx>
          </FxBox>
          <FormulaInput><Caret w={9} c="#999" /></FormulaInput>
        </FormulaRow>

        <SheetArea>
          <Grid>
            <Row $h={17}>
              <Corner><svg width="11" height="11" viewBox="0 0 11 11"><path d="M11 0v11H0z" fill="#dadada" /></svg></Corner>
              {letters.map(l => <ColHead key={l}>{l}</ColHead>)}
            </Row>
            {Array.from({ length: 9 }, (_, r) => (
              <Row key={r} $h={16}><RowHead $h={17}>{r + 1}</RowHead>{blanks(0)}</Row>
            ))}
            <Row $h={18} $lift>
              <RowHead $h={19}>10</RowHead>
              {heads.map((h, i) => (
                <HeadCell key={h}>{h}{i < 8 && <Filter><svg width="6" height="4" viewBox="0 0 6 4"><path d="M0 0h6L3 3.500z" fill="#555" /></svg></Filter>}</HeadCell>
              ))}
              {blanks(9)}
            </Row>
            {data.map((d, r) => (
              <Row key={r} $h={16}>
                <RowHead $h={17}>{r + 11}</RowHead>
                {d.map((v, i) => <Cell key={i} $band={r % 2 === 0}>{v}</Cell>)}
                {blanks(9)}
              </Row>
            ))}
          </Grid>
          <VScroll>
            <VTop><Tri w={8} h={7} d="M4 0 8 8H0z" /><VThumb /></VTop>
            <Tri w={8} h={6} d="M0 0h8L4 8z" />
          </VScroll>
          <DragOutline />
          <SlicerBox>
            <SlicerHead>
              <SlicerTitle>Country</SlicerTitle>
              <Stroke w={15} h={12} d="M.5 2l1.500 1.500L5 .5M.5 6l1.500 1.500L5 4.500M.5 10l1.500 1.500L5 8.500M7 2h7.500M7 6h7.500M7 10h7.500" c="#7c7c7c" />
              <Stroke w={14} h={13} d="M.5.8h12.500L8.500 6v6L5.500 10V6zM9.500 8.500l4 4M13.500 8.500l-4 4" c="#b4b4b4" />
            </SlicerHead>
            <SlicerItems>{Array.from({ length: 10 }, (_, i) => <SlicerItem key={i}>...</SlicerItem>)}</SlicerItems>
          </SlicerBox>
          {[[572.5, 131.5], [653.5, 131.5], [733.5, 131.5], [572.5, 242.5], [733.5, 242.5], [572.5, 352.5], [653.5, 352.5], [733.5, 352.5]].map(([x, y], i) => <Handle key={i} $x={x} $y={y} />)}
          <Cross><Stroke w={13} h={13} d="M6.500 0v13M0 6.500h13" c="#111" s={1.400} /></Cross>
        </SheetArea>

        <TabsBar>
          <Slot $w={34}><Stroke w={5} h={8} d="M4.500.5.5 4l4 3.500" c="#a8a8a8" /></Slot>
          <Slot $w={20}><Stroke w={5} h={8} d="M.5.5l4 3.500-4 3.500" c="#a8a8a8" /></Slot>
          <Slot $w={29} />
          <SheetTab $w={100} $line><Label $size={11} $ls={-0.1}>Employees List</Label></SheetTab>
          <SheetTab $w={56} $line><Label $size={11} $ls={-0.2}>Sheet2</Label></SheetTab>
          <SheetTab $w={56} $line><Label $size={11} $ls={-0.2}>Sheet1</Label></SheetTab>
          <ActiveTab><Label $size={11} $ls={-0.15} $weight={500} $color="#222">Sheet3</Label></ActiveTab>
          <SheetTab $w={6} $line />
          <Slot $w={77}><Stroke w={9} h={9} d="M4.500 0v9M0 4.500h9" c="#555" /></Slot>
          <Slot $w={339} />
          <Dots />
          <Slot $w={12} />
          <Slot $w={14}><Tri w={6} h={7} d="M8 0v8L0 4z" /></Slot>
          <HTrack />
          <Tri w={6} h={7} d="M0 0v8l8-4z" />
        </TabsBar>

        <Status>
          <Slot $w={41}><Label $size={9} $ls={-0.2}>Ready</Label></Slot>
          <Slot $w={21}>
            <Stroke w={12} h={11} d="M.5 2.500h8M4.500.5v2M3 3v3L1 10.500M6 3v2.500M7 5.500l4.500 5M11.500 5.500l-4.500 5M3 6h3" c="#555" />
          </Slot>
          <Label $size={9} $ls={-0.22} $weight={700}>Accessibility: Investigate</Label>
          <Slot $w={639} />
          <Slot $w={90}><Label $size={9} $ls={-0.2}>Average: 65.52214286</Label></Slot>
          <Slot $w={66}><Label $size={9} $ls={-0.2}>Count: 344</Label></Slot>
          <Slot $w={56}><Label $size={9} $ls={-0.2}>Sum: 7338.48</Label></Slot>
          <Slot $w={13} />
          <ViewButton $w={32} $on><Stroke w={11} h={11} d="M.5.5h10v10H.5zM3.800.5v10M7.200.5v10M.5 3.800h10M.5 7.200h10" c="#444" /></ViewButton>
          <ViewButton $w={37}><Stroke w={11} h={11} d="M.5.5h10v10H.5zM2.800 2.500h5.500v6H2.800zM4 4.500h3M4 6.500h3" c="#555" /></ViewButton>
          <ViewButton $w={32}><Stroke w={11} h={11} d="M.5.5h10v10H.5zM4 .5v5M7.200.5v5h3M.5 5.500h7" c="#555" /></ViewButton>
          <Slot $w={17}><Stroke w={6} h={2} d="M0 1h6" c="#888" /></Slot>
          <ZoomTrack><ZoomThumb /></ZoomTrack>
          <Slot $w={15}><Stroke w={6} h={6} d="M3 0v6M0 3h6" c="#888" /></Slot>
          <Slot $w={34}><Label $size={9} $ls={-0.2}>100%</Label></Slot>
        </Status>

        <Taskbar>
          <Slot $w={40}><svg width="14" height="14" viewBox="0 0 14 14" fill="#fff"><path d="M0 2l6-.9v5.600H0zM6.700 1 14 0v6.700H6.700zM0 7.300h6v5.600L0 12zM6.700 7.300H14V14l-7.300-1z" /></svg></Slot>
          <Slot $w={40}><Stroke w={18} h={18} d="M6.500 11.500l-6 6M17 6.800A5.900 5.900 0 1 1 5.200 6.800 5.900 5.900 0 0 1 17 6.800" c="#fff" s={1.600} /></Slot>
          <Slot $w={41}><Stroke w={15} h={14} d="M1 0v2.500h8V0M1 14v-2.500h8V14M1 4.500h8v5H1zM13 0v2.500M13 5.500v8.500" c="#dfe6e8" s={1.200} /></Slot>
          <AppSlot><Idm /></AppSlot>
          <AppSlot $open><Firefox /></AppSlot>
          <AppSlot $open><Pc /></AppSlot>
          <AppSlot $open><Folder /></AppSlot>
          <AppSlot $open><Chrome /></AppSlot>
          <AppSlot $active><OfficeIcon a="#21a366" b="#33c481" c="#107c41" d="#185c37" tile="#107c41" mark="M3 6l4.500 5.500M7.500 6 3 11.500" /></AppSlot>
          <AppSlot $open><OfficeIcon a="#2b7cd3" b="#41a5ee" c="#185abd" d="#103f91" tile="#185abd" mark="M1.800 6l1.700 5.500L5.200 6.500l1.700 5L8.600 6" /></AppSlot>
          <AppSlot $open><Filmora /></AppSlot>
          <Weather>
            <svg width="21" height="17" viewBox="0 0 21 17"><circle cx="10.500" cy="8.500" r="8" fill="#f0a32a" /><path d="M4 3.500h15M1 6.500h18M6 10h14M0 13h16" stroke="#fff3dc" strokeWidth="1.300" /></svg>
            <Label $size={11.500} $ls={-0.2} $color="#fff">14°C&nbsp; Smoke</Label>
          </Weather>
          <Slot $w={26}><Caret w={10} up c="#e6ebf0" s={1.200} /></Slot>
          <Slot $w={26}><svg width="10" height="14" viewBox="0 0 10 14"><rect x="2.500" y="0" width="5" height="9" rx="1.500" fill="#fff" /><path d="M1 6v4h8V6M5 10v3M2.500 13.300h5" stroke="#fff" fill="none" /></svg></Slot>
          <Slot $w={28}><svg width="14" height="11" viewBox="0 0 14 11"><path d="M2.500 3.500h10v6h-9V7" stroke="#fff" fill="none" /><rect x="5" y="5" width="6" height="3" fill="#fff" /><path d="M0 1h4v3H0zM2 4v5M13.300 5v3" stroke="#fff" fill="none" /></svg></Slot>
          <Slot $w={27}><Stroke w={12} h={12} d="M1 10.500C1.500 5 5 1.500 11 1M3.500 11C4 7 7 4.500 11 4M6 11.300c.3-2.500 2.500-4 5-4.300M9 11.500c0-1 .8-1.800 2-2" c="#dfe6ee" s={1.100} /></Slot>
          <Slot $w={26}><Stroke w={14} h={12} d="M.5 4h2.500L6 1v10L3 8H.5zM8 4q1.500 2 0 4M10 2.500q2.500 3.500 0 7M12 1q3.500 5 0 10" c="#dfe6ee" /></Slot>
          <Slot $w={32}><Stroke w={14} h={13} d="M3.500 8.500C.5 8.500 0 11.500 2 12c3 .5 4-2 6-3 2-.8 4.500 0 3 1.500M5 8.500 10.500 1l2 1.500L7 9.500l-2.500.8z" c="#e6ebf0" s={1.100} /></Slot>
          <Slot $w={35}><Stroke w={23} h={14} d="M.7.7h21.600v12.600H.7zM3 4h1.500M6 4h1.500M9 4h1.500M12 4h1.500M15 4h1.500M18 4h2M3 7h2.500M7 7h1.500M10 7h1.500M13 7h1.500M16 7h4M3 10.300h2M6.500 10.300h10M18 10.300h2" c="#f0f3f6" s={1.200} /></Slot>
          <Clock><Label $color="#fff">9:26 PM</Label><Label $color="#fff">12/6/2023</Label></Clock>
          <Slot $w={35}>
            <svg width="15" height="14" viewBox="0 0 15 14"><path d="M0 0h14v10.500H6L3 13.500v-3H0z" fill="#fff" /><path d="M2.500 3h9M2.500 5.500h6M2.500 8h4" stroke="#16283f" /><circle cx="10.800" cy="9.800" r="3.300" fill="#16283f" stroke="#fff" /><path d="M8.800 11.800l4-4" stroke="#fff" /></svg>
          </Slot>
          <Slot $w={10} />
        </Taskbar>
      </Window>
    </>
  );
}
